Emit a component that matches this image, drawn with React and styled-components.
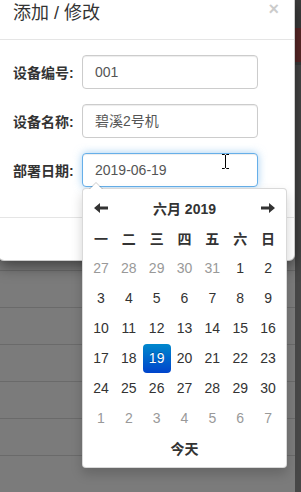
import React from "react";
import styled, { createGlobalStyle } from "styled-components";

const Global = createGlobalStyle`
  html, body { margin: 0; padding: 0; }
  body {
    background: #7b7b7b;
    font-family: "Liberation Sans", Arial, "Noto Sans CJK SC", sans-serif;
    font-size: 14px;
    color: #333;
  }
  * { box-sizing: border-box; }
`;

const Page = styled.div`
  display: flex;
  width: 301px;
  height: 492px;
  overflow: hidden;
`;

const Main = styled.div`
  flex: 1;
  display: flex;
  flex-direction: column;
  min-width: 0;
`;

const Strip = styled.div`
  width: 6px;
  display: flex;
  flex-direction: column;
  background: #454545;
`;

const StripBlock = styled.div`
  height: ${(p) => p.$h}px;
  background: ${(p) => p.$c};
`;

const Modal = styled.div`
  position: relative;
  z-index: 2;
  width: 297px;
  height: 283px;
  margin-left: -2px;
  background: #fff;
  border: 1px solid rgba(0, 0, 0, 0.2);
  border-top: none;
  border-radius: 0 0 6px 6px;
  box-shadow: 0 5px 15px rgba(0, 0, 0, 0.5);
  display: flex;
  flex-direction: column;
`;

const Header = styled.div`
  display: flex;
  justify-content: space-between;
  align-items: flex-start;
  padding: 0 14px 13px 14px;
  border-bottom: 1px solid #e5e5e5;
`;

const Title = styled.h4`
  margin: 0;
  font-size: 18px;
  line-height: 26px;
  font-weight: normal;
  color: #333;
`;

const Close = styled.span`
  font-size: 18px;
  font-weight: bold;
  line-height: 18px;
  color: #000;
  opacity: 0.2;
  padding-right: 1px;
`;

const Body = styled.div`
  padding: 15px 14px 15px 14px;
  display: flex;
  flex-direction: column;
  gap: 15px;
`;

const Row = styled.div`
  display: flex;
  align-items: center;
  position: relative;
  margin-bottom: ${(p) => (p.$last ? "15px" : "0")};
`;

const Label = styled.label`
  width: 69px;
  font-weight: bold;
  font-size: 14px;
  color: #333;
`;

const InputWrap = styled.div`
  position: relative;
`;

const Input = styled.div`
  width: 176px;
  height: 34px;
  padding: 6px 12px;
  font-size: 14px;
  line-height: 20px;
  color: #555;
  background: #fff;
  border: 1px solid ${(p) => (p.$focus ? "#66afe9" : "#ccc")};
  border-radius: 4px;
  box-shadow: ${(p) =>
    p.$focus
      ? "inset 0 1px 1px rgba(0,0,0,.075), 0 0 8px rgba(102,175,233,.6)"
      : "inset 0 1px 1px rgba(0,0,0,.075)"};
`;

const Footer = styled.div`
  flex: 1;
  border-top: 1px solid #e5e5e5;
`;

const Cursor = styled.svg`
  position: absolute;
  left: 139px;
  top: 0;
`;

const Picker = styled.div`
  position: absolute;
  z-index: 5;
  top: calc(100% + 1px);
  left: 0;
  width: 205px;
  padding: 4px;
  background: #fff;
  border: 1px solid rgba(0, 0, 0, 0.15);
  border-radius: 4px;
  box-shadow: 0 6px 12px rgba(0, 0, 0, 0.175);

  &::before {
    content: "";
    position: absolute;
    top: -7px;
    left: 6px;
    border-left: 7px solid transparent;
    border-right: 7px solid transparent;
    border-bottom: 7px solid rgba(0, 0, 0, 0.2);
  }
  &::after {
    content: "";
    position: absolute;
    top: -6px;
    left: 7px;
    border-left: 6px solid transparent;
    border-right: 6px solid transparent;
    border-bottom: 6px solid #fff;
  }
`;

const Grid = styled.div`
  display: grid;
  grid-template-columns: repeat(7, 1fr);
  grid-auto-rows: 30px;
`;

const Cell = styled.div`
  display: flex;
  align-items: center;
  justify-content: center;
  grid-column: ${(p) => (p.$span ? `span ${p.$span}` : "auto")};
  font-size: 14px;
  font-weight: ${(p) => (p.$bold ? "bold" : "normal")};
  color: ${(p) => (p.$muted ? "#999" : p.$active ? "#fff" : "#333")};
  border-radius: 4px;
  background: ${(p) =>
    p.$active ? "linear-gradient(to bottom, #0088cc, #0044cc)" : "transparent"};
  text-shadow: ${(p) => (p.$active ? "0 -1px 0 rgba(0,0,0,.25)" : "none")};
  height: ${(p) => (p.$active ? "29px" : "auto")};
  align-self: center;
`;

const Lines = styled.div`
  display: flex;
  flex-direction: column;
  padding-top: 9px;
`;

const Line = styled.div`
  height: 37px;
  border-top: 1px solid #6a6a6a;
  flex-shrink: 0;
`;

const Arrow = ({ dir }) => (
  <svg width="14" height="10" viewBox="0 0 14 10" style={{ transform: dir === "right" ? "scaleX(-1)" : "none" }}>
    <path d="M0 5 L6 0 L6 3.5 L14 3.5 L14 6.5 L6 6.5 L6 10 Z" fill="#333" />
  </svg>
);

const weeks = [
  [["27", 1], ["28", 1], ["29", 1], ["30", 1], ["31", 1], ["1"], ["2"]],
  [["3"], ["4"], ["5"], ["6"], ["7"], ["8"], ["9"]],
  [["10"], ["11"], ["12"], ["13"], ["14"], ["15"], ["16"]],
  [["17"], ["18"], ["19", 0, 1], ["20"], ["21"], ["22"], ["23"]],
  [["24"], ["25"], ["26"], ["27"], ["28"], ["29"], ["30"]],
  [["1", 1], ["2", 1], ["3", 1], ["4", 1], ["5", 1], ["6", 1], ["7", 1]],
];

const dows = ["一", "二", "三", "四", "五", "六", "日"];

export default function App() {
  return (
    <>
      <Global />
      <Page>
        <Main>
          <Modal>
            <Header>
              <Title>添加 / 修改</Title>
              <Close>×</Close>
            </Header>
            <Body>
              <Row>
                <Label>设备编号:</Label>
                <InputWrap>
                  <Input>001</Input>
                </InputWrap>
              </Row>
              <Row>
                <Label>设备名称:</Label>
                <InputWrap>
                  <Input>碧溪2号机</Input>
                </InputWrap>
              </Row>
              <Row $last>
                <Label>部署日期:</Label>
                <InputWrap>
                  <Input $focus>2019-06-19</Input>
                  <Cursor width="9" height="17" viewBox="0 0 9 17">
                    <path d="M1 1.5 H3.5 M5.5 1.5 H8 M4.5 2 V15 M1 15.5 H3.5 M5.5 15.5 H8 M3.5 1.5 L4.5 2.5 L5.5 1.5 M3.5 15.5 L4.5 14.5 L5.5 15.5" stroke="#000" strokeWidth="1" fill="none" />
                  </Cursor>
                  <Picker>
                    <Grid>
                      <Cell><Arrow dir="left" /></Cell>
                      <Cell $span={5} $bold>六月 2019</Cell>
                      <Cell><Arrow dir="right" /></Cell>
                      {dows.map((d) => (
                        <Cell key={d} $bold>{d}</Cell>
                      ))}
                      {weeks.flat().map(([d, muted, active], i) => (
                        <Cell key={i} $muted={!!muted} $active={!!active}>{d}</Cell>
                      ))}
                      <Cell $span={7} $bold>今天</Cell>
                    </Grid>
                  </Picker>
                </InputWrap>
              </Row>
            </Body>
            <Footer />
          </Modal>
          <Lines>
            {Array.from({ length: 6 }).map((_, i) => (
              <Line key={i} />
            ))}
          </Lines>
        </Main>
        <Strip>
          <StripBlock $h={28} $c="#3c3c3c" />
          <StripBlock $h={34} $c="#5c2828" />
          <StripBlock $h={3} $c="#3c3c3c" />
          <StripBlock $h={427} $c="#474747" />
        </Strip>
      </Page>
    </>
  );
}
